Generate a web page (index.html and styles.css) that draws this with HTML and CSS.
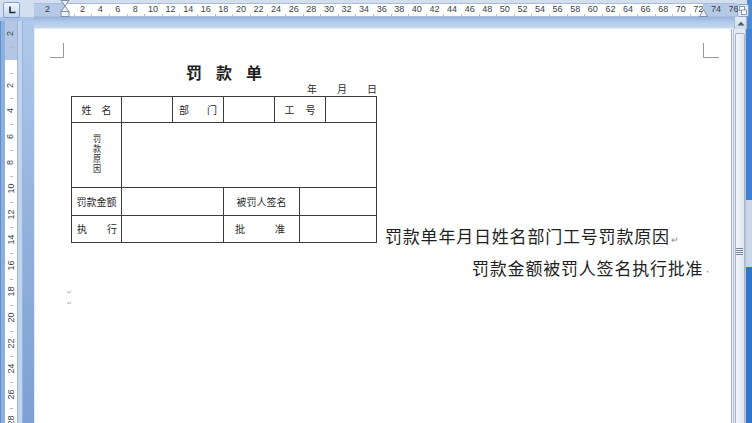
FILE: index.html
```html
<!DOCTYPE html>
<html lang="zh-CN">
<head>
<meta charset="utf-8">
<title>罚款单</title>
<link rel="stylesheet" href="styles.css">
</head>
<body>
<div class="app">
  <div class="leftcol">
    <div class="corner">
      <div class="tabbtn">
        <svg width="8" height="8" viewBox="0 0 8 8"><path d="M2 0.5V6.5H7.5" fill="none" stroke="#1f2a3a" stroke-width="1.6"/></svg>
      </div>
    </div>
    <div class="leftbody">
      <div class="edge"></div>
      <div class="vruler">
        <span><i>2</i></span><span></span><span><i>2</i></span><span><i>4</i></span><span><i>6</i></span><span><i>8</i></span><span><i>10</i></span><span><i>12</i></span><span><i>14</i></span><span><i>16</i></span><span><i>18</i></span><span><i>20</i></span><span><i>22</i></span><span><i>24</i></span><span><i>26</i></span><span><i>28</i></span>
      </div>
      <div class="gutter"><div class="gutter-light"></div><div class="gutter-dark"></div></div>
    </div>
  </div>

  <div class="topbar">
    <div class="rulerwrap">
      <div class="hruler">
        <div class="nums">
          <span>2</span><span></span><span>2</span><span>4</span><span>6</span><span>8</span><span>10</span><span>12</span><span>14</span><span>16</span><span>18</span><span>20</span><span>22</span><span>24</span><span>26</span><span>28</span><span>30</span><span>32</span><span>34</span><span>36</span><span>38</span><span>40</span><span>42</span><span>44</span><span>46</span><span>48</span><span>50</span><span>52</span><span>54</span><span>56</span><span>58</span><span>60</span><span>62</span><span>64</span><span>66</span><span>68</span><span>70</span><span>72</span><span>74</span><span>76</span>
        </div>
        <svg class="indent-left" width="10" height="18" viewBox="0 0 10 18">
          <path d="M1 0.5H9L5 6Z" fill="#eef2f8" stroke="#7d8ea8"/>
          <path d="M5 6L9 11.5H1Z" fill="#eef2f8" stroke="#7d8ea8"/>
          <rect x="1" y="11.5" width="8" height="5" fill="#eef2f8" stroke="#7d8ea8"/>
        </svg>
        <svg class="indent-right" width="9" height="8" viewBox="0 0 9 8">
          <path d="M4.5 0.5L8.5 7.5H0.5Z" fill="#eef2f8" stroke="#7d8ea8"/>
        </svg>
      </div>
      <div class="band"></div>
    </div>
    <div class="topright">
      <div class="viewbtn">
        <svg width="12" height="13" viewBox="0 0 12 13">
          <rect x="0.5" y="0.5" width="11" height="12" rx="1.5" fill="#dfe8f5" stroke="#8ea3c2"/>
          <rect x="2.5" y="2.5" width="5" height="4" fill="#fff" stroke="#6f84a4" stroke-width="0.8"/>
          <rect x="4.5" y="6" width="5" height="4.5" fill="#fff" stroke="#6f84a4" stroke-width="0.8"/>
        </svg>
      </div>
      <div class="uparrow">
        <svg width="8" height="5" viewBox="0 0 8 5"><path d="M0.5 4.5L4 0.8L7.5 4.5Z" fill="#4a5a70"/></svg>
      </div>
    </div>
  </div>

  <div class="page">
    <div class="crop crop-tl"></div>
    <div class="crop crop-tr"></div>
    <div class="sheet">
      <div class="flowrow">
        <div class="formcol">
          <div class="title"><span>罚</span><span>款</span><span>单</span></div>
          <div class="date"><span>年</span><span>月</span><span>日</span></div>
          <div class="form">
            <div class="c c1 sp10"><span>姓</span><span>名</span></div>
            <div class="c c2"></div>
            <div class="c c3 sp18"><span>部</span><span>门</span></div>
            <div class="c c4"></div>
            <div class="c c56 sp11"><span>工</span><span>号</span></div>
            <div class="c c7"></div>

            <div class="c c1"><div class="vtext">罚款原因</div></div>
            <div class="c c27"></div>

            <div class="c c1">罚款金额</div>
            <div class="c c23"></div>
            <div class="c c45">被罚人签名</div>
            <div class="c c67"></div>

            <div class="c c1 just zhixing"><span>执</span><span>行</span></div>
            <div class="c c23"></div>
            <div class="c c45 just pizhun"><span>批</span><span>准</span></div>
            <div class="c c67"></div>
          </div>
        </div>
        <p class="line1">罚款单年月日姓名部门工号罚款原因<span class="pmark">↵</span></p>
      </div>
      <p class="line2">罚款金额被罚人签名执行批准<span class="pdot">·</span></p>
      <p class="mark">↵</p>
      <p class="mark">↵</p>
    </div>
  </div>

  <div class="scrollcol">
    <div class="sgap"></div>
    <div class="strack">
      <div class="thumb"><div class="grip"><i></i><i></i><i></i><i></i></div></div>
    </div>
    <div class="sedge"></div>
  </div>
</div>
</body>
</html>
```

FILE: styles.css
```css
* { box-sizing: border-box; }
html, body { margin: 0; padding: 0; }
body {
  width: 752px;
  height: 423px;
  overflow: hidden;
  background: #c9d8ee;
  font-family: "Liberation Sans", Arial, sans-serif;
}
p { margin: 0; }

.app {
  display: grid;
  grid-template-columns: 34px 698px 20px;
  grid-template-rows: 29px 394px;
  width: 752px;
  height: 423px;
  overflow: hidden;
}

/* ---------- left column ---------- */
.leftcol {
  grid-row: 1 / 3;
  grid-column: 1;
  display: flex;
  flex-direction: column;
  overflow: hidden;
}
.corner {
  height: 20.6px;
  flex: none;
  background: linear-gradient(to bottom, #d3dff0 0 17px, #a9c2e6 17px);
  padding: 2px 0 0 3px;
}
.tabbtn {
  width: 17px;
  height: 16px;
  border: 1px solid #86a2c9;
  border-radius: 2px;
  background: linear-gradient(to bottom, #f1f6fc, #c4d6ee);
  display: flex;
  align-items: center;
  justify-content: center;
}
.leftbody {
  flex: 1;
  display: flex;
}
.edge {
  width: 5px;
  background: linear-gradient(to right, #5f8fcf 0 1px, #8eb0dc 1px);
}
.vruler {
  width: 13px;
  display: flex;
  flex-direction: column;
  background:
    repeating-linear-gradient(to bottom, #b4bac4 0 1px, transparent 1px 25.8px) 5px 0 / 3px 100% no-repeat,
    linear-gradient(to bottom, #b3c7e5 0 38.7px, #ffffff 38.7px);
  border-right: 1px solid #9fb6d8;
}
.vruler span {
  height: 25.8px;
  flex: none;
  display: flex;
  align-items: center;
  justify-content: center;
}
.vruler i {
  font-style: normal;
  font-size: 9px;
  color: #3a3f48;
  transform: rotate(-90deg);
  display: block;
  line-height: 9px;
}
.gutter {
  flex: 1;
  display: flex;
}
.gutter-light {
  width: 4px;
  background: #c3d5ee;
}
.gutter-dark {
  flex: 1;
  background: linear-gradient(to bottom, #b1c9ea, #93b1dd 50%, #7c9fd2);
  border-left: 1px solid #98b3dc;
}

/* ---------- top bar ---------- */
.topbar {
  grid-row: 1;
  grid-column: 2 / 4;
  display: flex;
  background: #d3dff0;
}
.rulerwrap {
  width: 703px;
  flex: none;
  display: flex;
  flex-direction: column;
}
.hruler {
  position: relative;
  margin-top: 3px;
  height: 14px;
  flex: none;
  background:
    repeating-linear-gradient(to right, transparent 0 4.6px, #b8bfc9 4.6px 5.6px, transparent 5.6px 17.6px) 0 10px / 100% 2px no-repeat,
    linear-gradient(to right, #b6c9e5 0 31px, #ffffff 31px 669px, #b6c9e5 669px);
  border-top: 1px solid #a9bddb;
  border-bottom: 1px solid #a9bddb;
}
.nums {
  display: flex;
  padding-left: 4.6px;
  height: 100%;
  align-items: flex-start;
}
.nums span {
  width: 17.6px;
  flex: none;
  text-align: center;
  font-size: 9px;
  line-height: 11px;
  color: #3a3f48;
}
.indent-left {
  position: absolute;
  left: 26px;
  top: -4px;
}
.indent-right {
  position: absolute;
  left: 665px;
  top: 5px;
}
.band {
  flex: 1;
  background: linear-gradient(to bottom, #97b4de, #b2c9ea 45%, #c8d8ef);
  border-bottom: 1px solid #e4ecf7;
}
.topright {
  flex: 1;
  display: flex;
  flex-direction: column;
  align-items: flex-start;
  background: linear-gradient(to right, #d3dff0 0 10px, #4f8ad6 10px);
}
.viewbtn {
  margin-top: 3px;
  height: 14px;
}
.uparrow {
  margin-left: -3px;
  width: 13px;
  flex: 1;
  display: flex;
  align-items: center;
  justify-content: center;
  background: linear-gradient(to bottom, #e6edf6, #cfdbea);
  border-left: 1px solid #a8b8cf;
  border-right: 1px solid #a8b8cf;
}

/* ---------- page ---------- */
.page {
  grid-row: 2;
  grid-column: 2;
  position: relative;
  background: #ffffff;
  border-left: 1px solid #e6ecf4;
  border-right: 1px solid #a3afc0;
  font-family: "Noto Sans CJK SC", "Noto Sans", sans-serif;
  color: #222;
}
.crop {
  position: absolute;
  width: 14px;
  height: 15px;
  top: 14px;
  border-bottom: 1px solid #9a9a9a;
}
.crop-tl {
  left: 15px;
  border-right: 1px solid #9a9a9a;
}
.crop-tr {
  left: 668px;
  width: 16px;
  border-left: 1px solid #9a9a9a;
}
.sheet {
  padding: 33px 0 0 36px;
}
.flowrow {
  display: flex;
  align-items: flex-end;
}
.formcol {
  width: 306px;
  flex: none;
}
.title {
  display: flex;
  justify-content: center;
  gap: 14px;
  font-size: 16px;
  font-weight: 700;
  line-height: 20px;
  height: 20px;
  color: #1e1e1e;
}
.date {
  display: flex;
  justify-content: flex-end;
  gap: 20px;
  font-size: 10px;
  line-height: 13px;
  height: 13px;
  color: #2a2a2a;
}
.form {
  margin-top: 1px;
  width: 306px;
  display: grid;
  grid-template-columns: 49px 50px 50px 50px 24px 25px 50px;
  grid-template-rows: 25px 64px 27px 26px;
  gap: 1px;
  padding: 1px;
  background: #3c3c3c;
}
.c {
  background: #fff;
  display: flex;
  align-items: center;
  justify-content: center;
  font-size: 10px;
  line-height: 12px;
  color: #2a2a2a;
  white-space: nowrap;
}
.c1 { grid-column: 1; }
.c2 { grid-column: 2; }
.c3 { grid-column: 3; }
.c4 { grid-column: 4; }
.c56 { grid-column: 5 / 7; }
.c7 { grid-column: 7; }
.c27 { grid-column: 2 / 8; }
.c23 { grid-column: 2 / 4; }
.c45 { grid-column: 4 / 6; }
.c67 { grid-column: 6 / 8; }
.sp10 { gap: 10px; }
.sp18 { gap: 18px; }
.sp11 { gap: 11px; }
.just { justify-content: space-between; }
.zhixing { padding: 0 4px 0 5px; }
.pizhun { padding: 0 14px 0 11px; }
.vtext {
  writing-mode: vertical-rl;
  text-orientation: upright;
  white-space: nowrap;
  width: 12px;
  height: 42px;
  font-size: 9.5px;
  line-height: 12px;
  letter-spacing: 0.5px;
  transform: scaleX(0.85);
  margin-left: 1px;
}
.line1 {
  margin: 0 0 -11px 8px;
  font-size: 17px;
  letter-spacing: 0.8px;
  line-height: 28px;
  white-space: nowrap;
  color: #1f1f1f;
}
.pmark {
  font-size: 9px;
  color: #8a8a8a;
  margin-left: 1px;
  letter-spacing: 0;
}
.line2 {
  margin-top: 11px;
  padding-left: 401px;
  font-size: 17px;
  letter-spacing: 0.8px;
  line-height: 28px;
  white-space: nowrap;
  color: #1f1f1f;
}
.pdot {
  font-size: 8px;
  color: #9a9a9a;
  letter-spacing: 0;
}
.mark {
  margin-left: -4px;
  font-size: 6px;
  line-height: 11px;
  color: #a8a8a8;
}

/* ---------- scrollbar ---------- */
.scrollcol {
  grid-row: 2;
  grid-column: 3;
  display: flex;
}
.sgap {
  width: 1px;
  background: #eef2f8;
}
.strack {
  width: 13px;
  background: #e3e9f2;
  border-left: 1px solid #b7c4d6;
  border-right: 1px solid #b7c4d6;
  padding: 4px 0 0 0;
}
.thumb {
  height: 420px;
  margin: 0 0.5px;
  border: 1px solid #a6b5ca;
  border-radius: 2px;
  background: linear-gradient(to right, #f4f7fb, #dfe6f0);
  padding-top: 214px;
  display: flex;
  justify-content: center;
}
.grip {
  display: flex;
  flex-direction: column;
  gap: 1px;
  width: 7px;
}
.grip i {
  display: block;
  height: 1px;
  background: #7c8799;
}
.sedge {
  flex: 1;
  background: linear-gradient(to bottom, #3f7fd4 0 171px, #c9d6e8 171px 238px, #2f74cf 238px);
}
```
